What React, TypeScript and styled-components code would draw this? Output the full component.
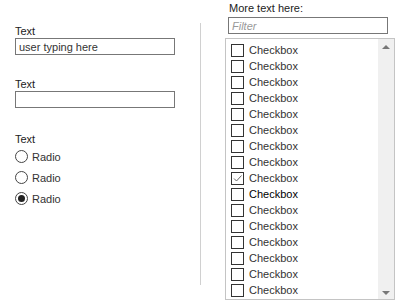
import React from 'react'
import styled, { createGlobalStyle } from 'styled-components'

const Global = createGlobalStyle`
    body {
        margin: 0;
        font-family: "Liberation Sans", Arial, sans-serif;
        font-size: 11px;
        color: #333;
        background: #fff;
    }
`

const Page = styled.div`
    display: flex;
    width: 410px;
    height: 306px;
`

const LeftPanel = styled.div`
    box-sizing: border-box;
    width: 201px;
    height: 262px;
    margin-top: 23px;
    padding: 2px 0 0 15px;
    border-right: 1px solid #d0d0d0;
    display: flex;
    flex-direction: column;
`

const Field = styled.div<{ $gap?: number }>`
    display: flex;
    flex-direction: column;
    margin-top: ${p => p.$gap || 0}px;
`

const Label = styled.label`
    display: block;
    line-height: 13px;
    color: #222;
`

const TextInput = styled.input`
    box-sizing: border-box;
    width: 160px;
    height: 17px;
    margin: 0;
    padding: 0 3px;
    border: 1px solid #777;
    font: inherit;
    color: #333;
    outline: none;
    &::placeholder {
        color: #999;
        font-style: italic;
    }
`

const RadioRow = styled.div`
    display: flex;
    align-items: center;
    height: 21px;
    gap: 4px;
`

const RadioCircle = styled.span<{ $checked?: boolean }>`
    box-sizing: border-box;
    width: 13px;
    height: 13px;
    border-radius: 50%;
    border: 1px solid #444;
    display: flex;
    align-items: center;
    justify-content: center;
    &::after {
        content: '';
        display: ${p => (p.$checked ? 'block' : 'none')};
        width: 7px;
        height: 7px;
        border-radius: 50%;
        background: #222;
    }
`

const RightPanel = styled.div`
    display: flex;
    flex-direction: column;
    padding: 2px 0 0 24px;
`

const TopLabel = styled(Label)`
    margin-left: 4px;
`

const FilterInput = styled(TextInput)`
    margin: 2px 0 0 3px;
`

const ListBox = styled.div`
    box-sizing: border-box;
    width: 170px;
    height: 262px;
    margin-top: 4px;
    border: 1px solid #c4c4c4;
    display: flex;
`

const Rows = styled.div`
    flex: 1;
    padding: 3px 0 0 5px;
`

const CheckRow = styled.div<{ $dark?: boolean }>`
    display: flex;
    align-items: center;
    height: 16px;
    gap: 5px;
    color: ${p => (p.$dark ? '#000' : '#333')};
`

const Box = styled.span`
    box-sizing: border-box;
    width: 13px;
    height: 13px;
    border: 1px solid #333;
    display: flex;
    align-items: center;
    justify-content: center;
`

const Scrollbar = styled.div`
    width: 16px;
    background: #f0f0f0;
    display: flex;
    flex-direction: column;
    justify-content: space-between;
    align-items: center;
    padding: 6px 0 4px;
`

const Arrow = styled.span<{ $down?: boolean }>`
    width: 0;
    height: 0;
    border-left: 4px solid transparent;
    border-right: 4px solid transparent;
    ${p => (p.$down ? 'border-top: 4px solid #777;' : 'border-bottom: 4px solid #777;')}
`

const checkboxes = Array.from({ length: 16 }, (_, i) => i)

export default function App() {
    return (
        <Page>
            <Global />
            <LeftPanel>
                <Field>
                    <Label>Text</Label>
                    <TextInput defaultValue="user typing here" />
                </Field>
                <Field $gap={23}>
                    <Label>Text</Label>
                    <TextInput />
                </Field>
                <Field $gap={25}>
                    <Label>Text</Label>
                    {[false, false, true].map((checked, i) => (
                        <RadioRow key={i}>
                            <RadioCircle $checked={checked} />
                            <span>Radio</span>
                        </RadioRow>
                    ))}
                </Field>
            </LeftPanel>
            <RightPanel>
                <TopLabel>More text here:</TopLabel>
                <FilterInput placeholder="Filter" />
                <ListBox>
                    <Rows>
                        {checkboxes.map(i => (
                            <CheckRow key={i} $dark={i === 9}>
                                <Box>
                                    {i === 8 && (
                                        <svg width="11" height="11" viewBox="0 0 11 11">
                                            <path d="M2 5.5 L4.5 8 L9.5 2.5" fill="none" stroke="#666" strokeWidth="1" />
                                        </svg>
                                    )}
                                </Box>
                                <span>Checkbox</span>
                            </CheckRow>
                        ))}
                    </Rows>
                    <Scrollbar>
                        <Arrow />
                        <Arrow $down />
                    </Scrollbar>
                </ListBox>
            </RightPanel>
        </Page>
    )
}
